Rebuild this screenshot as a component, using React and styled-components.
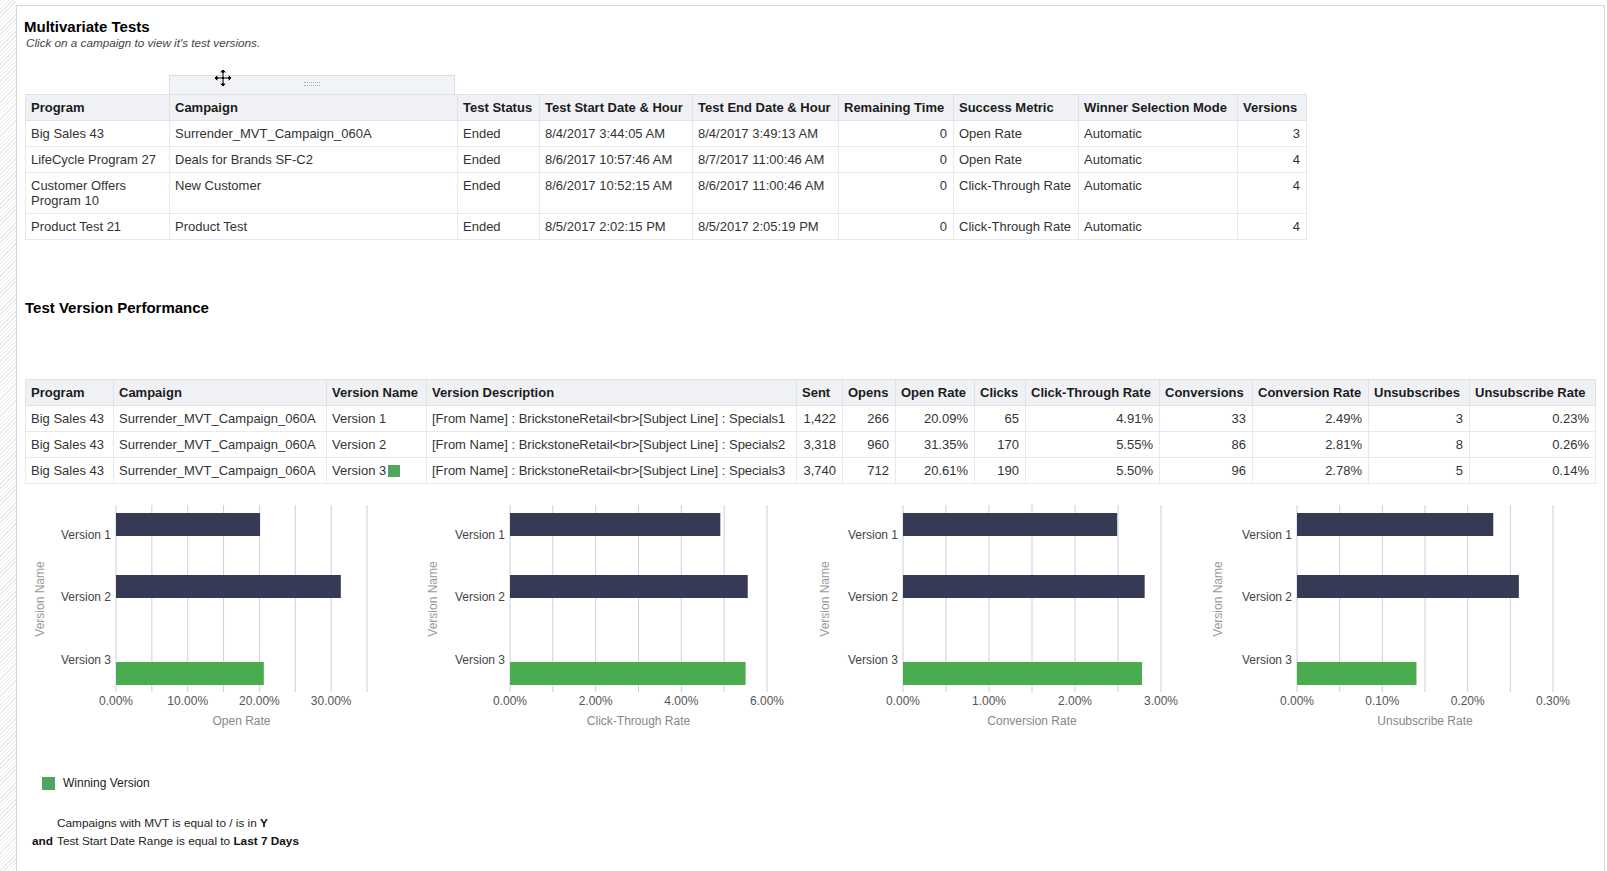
import React from "react";
import styled, { createGlobalStyle } from "styled-components";

const GlobalStyle = createGlobalStyle`
  html, body {
    margin: 0;
    padding: 0;
    background: #fff;
    overflow: hidden;
  }
  body {
    font-family: "Liberation Sans", Arial, sans-serif;
    color: #333;
  }
`;

const Page = styled.div`
  display: flex;
  height: 871px;
  overflow: hidden;
`;

const HatchStrip = styled.div`
  flex: 0 0 16px;
  background: repeating-linear-gradient(135deg, #e8eaee 0 1px, #fff 1px 3px);
`;

const Panel = styled.div`
  flex: 0 0 1584px;
  box-sizing: border-box;
  margin-top: 5px;
  border: 1px solid #d5d8dc;
  border-bottom: none;
  padding: 12px 8px 0 8px;
`;

const Title = styled.div`
  font-size: 15px;
  line-height: 18px;
  font-weight: bold;
  color: #000;
  margin-left: -1px;
`;

const Subtitle = styled.div`
  font-size: 11.7px;
  line-height: 14px;
  font-style: italic;
  color: #444;
  margin-left: 1px;
`;

const DragHandle = styled.div`
  position: relative;
  box-sizing: border-box;
  margin: 25px 0 0 144px;
  width: 286px;
  height: 19px;
  background: #f2f3f6;
  border: 1px solid #d9dde3;
  border-bottom: none;
  display: flex;
  align-items: center;
  justify-content: center;
`;

const Grip = styled.div`
  width: 16px;
  height: 2px;
  border-top: 1px dotted #a8adb5;
  border-bottom: 1px dotted #a8adb5;
  margin-top: -2px;
`;

const MoveCursor = styled.svg`
  position: absolute;
  left: 43px;
  top: -8px;
`;

const Table = styled.table`
  border-collapse: collapse;
  table-layout: fixed;
  width: ${(p) => p.$width}px;
  font-size: 13px;
  line-height: 15px;
  border: 1px solid #dfe3e8;
`;

const Th = styled.th`
  background: #eff1f5;
  color: #1b1b1b;
  font-weight: bold;
  text-align: left;
  padding: 5px 6px 5px 5px;
  border: 1px solid #dfe3e8;
  white-space: nowrap;
  overflow: hidden;
`;

const Td = styled.td`
  color: #333;
  text-align: ${(p) => (p.$num ? "right" : "left")};
  vertical-align: top;
  padding: 5px 6px 5px 5px;
  border: 1px solid #e6e9ed;
  white-space: ${(p) => (p.$wrap ? "normal" : "nowrap")};
  overflow: hidden;
`;

const WinMark = styled.span`
  display: inline-block;
  width: 12px;
  height: 12px;
  margin-left: 2px;
  background: #52a55f;
  vertical-align: -2px;
`;

const SectionTitle = styled.div`
  margin-top: 59px;
  font-size: 15px;
  line-height: 18px;
  font-weight: bold;
  color: #000;
`;

const Spacer = styled.div`
  height: ${(p) => p.$h}px;
`;

const ChartsRow = styled.div`
  display: grid;
  grid-template-columns: repeat(4, 1fr);
  width: 1570px;
  margin-top: 12px;
`;

const ChartSvg = styled.svg`
  display: block;
  font-family: "Liberation Sans", Arial, sans-serif;
`;

const Legend = styled.div`
  display: flex;
  align-items: center;
  gap: 8px;
  margin: 41px 0 0 17px;
  font-size: 12px;
  line-height: 13px;
  color: #222;
`;

const LegendSwatch = styled.span`
  width: 13px;
  height: 13px;
  background: #52a55f;
`;

const Filters = styled.div`
  display: grid;
  grid-template-columns: 25px auto;
  margin: 24px 0 0 7px;
  font-size: 11.8px;
  line-height: 18px;
  color: #222;
`;

const Strong = styled.b`
  color: #111;
`;

const tests = [
  ["Big Sales 43", "Surrender_MVT_Campaign_060A", "Ended", "8/4/2017 3:44:05 AM", "8/4/2017 3:49:13 AM", "0", "Open Rate", "Automatic", "3"],
  ["LifeCycle Program 27", "Deals for Brands SF-C2", "Ended", "8/6/2017 10:57:46 AM", "8/7/2017 11:00:46 AM", "0", "Open Rate", "Automatic", "4"],
  ["Customer Offers Program 10", "New Customer", "Ended", "8/6/2017 10:52:15 AM", "8/6/2017 11:00:46 AM", "0", "Click-Through Rate", "Automatic", "4"],
  ["Product Test 21", "Product Test", "Ended", "8/5/2017 2:02:15 PM", "8/5/2017 2:05:19 PM", "0", "Click-Through Rate", "Automatic", "4"],
];

const testCols = [
  ["Program", 144],
  ["Campaign", 288],
  ["Test Status", 82],
  ["Test Start Date & Hour", 153],
  ["Test End Date & Hour", 146],
  ["Remaining Time", 115, true],
  ["Success Metric", 125],
  ["Winner Selection Mode", 159],
  ["Versions", 69, true],
];

const perfCols = [
  ["Program", 88],
  ["Campaign", 213],
  ["Version Name", 100],
  ["Version Description", 370],
  ["Sent", 46, true],
  ["Opens", 53, true],
  ["Open Rate", 79, true],
  ["Clicks", 51, true],
  ["Click-Through Rate", 134, true],
  ["Conversions", 93, true],
  ["Conversion Rate", 116, true],
  ["Unsubscribes", 101, true],
  ["Unsubscribe Rate", 126, true],
];

const perf = [
  ["Big Sales 43", "Surrender_MVT_Campaign_060A", "Version 1", "[From Name] : BrickstoneRetail<br>[Subject Line] : Specials1", "1,422", "266", "20.09%", "65", "4.91%", "33", "2.49%", "3", "0.23%"],
  ["Big Sales 43", "Surrender_MVT_Campaign_060A", "Version 2", "[From Name] : BrickstoneRetail<br>[Subject Line] : Specials2", "3,318", "960", "31.35%", "170", "5.55%", "86", "2.81%", "8", "0.26%"],
  ["Big Sales 43", "Surrender_MVT_Campaign_060A", "Version 3", "[From Name] : BrickstoneRetail<br>[Subject Line] : Specials3", "3,740", "712", "20.61%", "190", "5.50%", "96", "2.78%", "5", "0.14%"],
];

const charts = [
  { title: "Open Rate", max: 35, steps: 7, labelEvery: 2, x0: 91, width: 251, values: [20.09, 31.35, 20.61] },
  { title: "Click-Through Rate", max: 6, steps: 6, labelEvery: 2, x0: 92, width: 257, values: [4.91, 5.55, 5.5] },
  { title: "Conversion Rate", max: 3, steps: 6, labelEvery: 2, x0: 93, width: 258, values: [2.49, 2.81, 2.78] },
  { title: "Unsubscribe Rate", max: 0.3, steps: 6, labelEvery: 2, x0: 94, width: 256, values: [0.23, 0.26, 0.14] },
];

const barTops = [17, 79, 166];
const labelYs = [39, 101, 164];

const Chart = ({ title, max, steps, labelEvery, x0, width, values }) => {
  const scale = width / max;
  const ticks = Array.from({ length: steps + 1 }, (_, i) => (max / steps) * i);
  return (
    <ChartSvg width="392" height="240">
      {ticks.map((t, i) => (
        <line key={i} x1={x0 + t * scale} x2={x0 + t * scale} y1="9" y2="196" stroke="#c9d1dc" strokeWidth="1" />
      ))}
      {values.map((v, i) => (
        <rect key={i} x={x0} y={barTops[i]} width={v * scale} height="23" fill={i === 2 ? "#4aac4e" : "#373a55"} />
      ))}
      {values.map((_, i) => (
        <text key={i} x={x0 - 5} y={labelYs[i] + 4} textAnchor="end" fontSize="12" fill="#444">
          Version {i + 1}
        </text>
      ))}
      {ticks.map((t, i) =>
        i % labelEvery === 0 ? (
          <text key={i} x={x0 + t * scale} y="209" textAnchor="middle" fontSize="12" fill="#555">
            {t.toFixed(2)}%
          </text>
        ) : null
      )}
      <text x={x0 + width / 2} y="229" textAnchor="middle" fontSize="12" fill="#888">
        {title}
      </text>
      <text x="19" y="103" transform="rotate(-90 19 103)" textAnchor="middle" fontSize="12" fill="#999">
        Version Name
      </text>
    </ChartSvg>
  );
};

export default function App() {
  return (
    <>
      <GlobalStyle />
      <Page>
        <HatchStrip />
        <Panel>
          <Title>Multivariate Tests</Title>
          <Subtitle>Click on a campaign to view it's test versions.</Subtitle>

          <DragHandle>
            <Grip />
            <MoveCursor width="20" height="20" viewBox="0 0 20 20">
              <path
                d="M10 1 L13.8 4.8 H11 V9 H15.2 V6.2 L19 10 L15.2 13.8 V11 H11 V15.2 H13.8 L10 19 L6.2 15.2 H9 V11 H4.8 V13.8 L1 10 L4.8 6.2 V9 H9 V4.8 H6.2 Z"
                fill="#000"
                stroke="#fff"
                strokeWidth="0.9"
                strokeLinejoin="miter"
              />
            </MoveCursor>
          </DragHandle>

          <Table $width={1281}>
            <colgroup>
              {testCols.map(([name, w]) => (
                <col key={name} style={{ width: w }} />
              ))}
            </colgroup>
            <thead>
              <tr>
                {testCols.map(([name]) => (
                  <Th key={name}>{name}</Th>
                ))}
              </tr>
            </thead>
            <tbody>
              {tests.map((row, r) => (
                <tr key={r}>
                  {row.map((cell, c) => (
                    <Td key={c} $num={testCols[c][2]} $wrap={c === 0}>
                      {cell}
                    </Td>
                  ))}
                </tr>
              ))}
            </tbody>
          </Table>

          <SectionTitle>Test Version Performance</SectionTitle>
          <Spacer $h={62} />

          <Table $width={1570}>
            <colgroup>
              {perfCols.map(([name, w]) => (
                <col key={name} style={{ width: w }} />
              ))}
            </colgroup>
            <thead>
              <tr>
                {perfCols.map(([name]) => (
                  <Th key={name}>{name}</Th>
                ))}
              </tr>
            </thead>
            <tbody>
              {perf.map((row, r) => (
                <tr key={r}>
                  {row.map((cell, c) => (
                    <Td key={c} $num={perfCols[c][2]}>
                      {cell}
                      {c === 2 && r === 2 && <WinMark />}
                    </Td>
                  ))}
                </tr>
              ))}
            </tbody>
          </Table>

          <ChartsRow>
            {charts.map((ch) => (
              <Chart key={ch.title} {...ch} />
            ))}
          </ChartsRow>

          <Legend>
            <LegendSwatch />
            Winning Version
          </Legend>

          <Filters>
            <span />
            <span>
              Campaigns with MVT is equal to / is in <Strong>Y</Strong>
            </span>
            <Strong>and</Strong>
            <span>
              Test Start Date Range is equal to <Strong>Last 7 Days</Strong>
            </span>
          </Filters>
        </Panel>
      </Page>
    </>
  );
}
